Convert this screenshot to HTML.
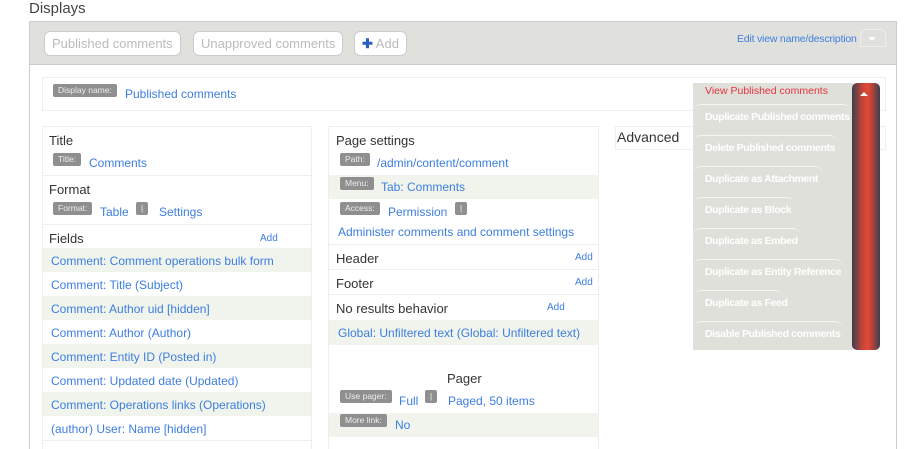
<!DOCTYPE html>
<html><head><style>
*{margin:0;padding:0;box-sizing:border-box}
html,body{width:921px;height:449px;overflow:hidden}
body{background:#fff;font-family:"Liberation Sans",sans-serif;position:relative;color:#444}
.a{position:absolute}
.lk{color:#3d7ee0;font-size:12px;white-space:nowrap}
.lbl{position:absolute;background:#8f8f8f;color:#eee;font-size:8.5px;border-radius:2px;padding:1px 5px;height:13px;line-height:11px;white-space:nowrap}
.h{font-size:13px;color:#333;white-space:nowrap}
.g{background:#f0f4ec}
.btn{position:absolute;top:31px;height:25px;border:1px solid #ccc;border-radius:6px;background:#fff;color:#bbb;font-size:13px;line-height:23px;padding:0 7px;white-space:nowrap}
.dd{position:absolute;left:693px;height:24px;color:#fff;font-weight:bold;font-size:10.5px;line-height:25px;padding-left:12px;border-top:1px solid #f4f4f0;border-radius:8px 8px 0 0;white-space:nowrap;letter-spacing:-0.4px}
.bd{border:1px solid #eee}
</style></head><body>
<div class="a" style="left:29px;top:0;font-size:15px;color:#444">Displays</div>
<div class="a" style="left:29px;top:21px;width:868px;height:44px;background:#e0e1dc;border:1px solid #ccc"></div>
<div class="a" style="left:29px;top:64px;width:868px;height:385px;border-left:1px solid #ccc;border-right:1px solid #ccc"></div>
<div class="btn" style="left:44px">Published comments</div>
<div class="btn" style="left:193px">Unapproved comments</div>
<div class="btn" style="left:354px"><span style="color:#2a5fc0;font-weight:bold">✚</span> Add</div>
<div class="a lk" style="left:737px;top:33px;font-size:10.5px;letter-spacing:-0.2px">Edit view name/description</div>
<div class="a" style="left:860px;top:29px;width:26px;height:18px;border:1px solid #eee;border-radius:6px 6px 0 0"></div>
<div class="a" style="left:868px;top:37px;border-left:4px solid transparent;border-right:4px solid transparent;border-top:4px solid #fff"></div>

<div class="a bd" style="left:42px;top:77px;width:844px;height:34px"></div>
<div class="lbl" style="left:53px;top:84px">Display name:</div>
<div class="a lk" style="left:125px;top:87px">Published comments</div>

<!-- col1 -->
<div class="a bd" style="left:42px;top:126px;width:270px;height:330px"></div>
<div class="a h" style="left:49px;top:133px">Title</div>
<div class="lbl" style="left:53px;top:153px">Title:</div>
<div class="a lk" style="left:89px;top:156px">Comments</div>
<div class="a" style="left:43px;top:175px;width:268px;border-top:1px solid #eee"></div>
<div class="a h" style="left:49px;top:182px">Format</div>
<div class="lbl" style="left:53px;top:202px">Format:</div>
<div class="a lk" style="left:100px;top:205px">Table</div>
<div class="lbl" style="left:136px;top:202px">|</div>
<div class="a lk" style="left:159px;top:205px">Settings</div>
<div class="a" style="left:43px;top:224px;width:268px;border-top:1px solid #eee"></div>
<div class="a h" style="left:49px;top:231px">Fields</div>
<div class="a lk" style="left:260px;top:233px;font-size:10px">Add</div>
<div class="a g" style="left:43px;top:248px;width:268px;height:24px"></div>
<div class="a g" style="left:43px;top:296px;width:268px;height:24px"></div>
<div class="a g" style="left:43px;top:344px;width:268px;height:24px"></div>
<div class="a g" style="left:43px;top:392px;width:268px;height:24px"></div>
<div class="a lk" style="left:51px;top:254px">Comment: Comment operations bulk form</div>
<div class="a lk" style="left:51px;top:278px">Comment: Title (Subject)</div>
<div class="a lk" style="left:51px;top:302px">Comment: Author uid [hidden]</div>
<div class="a lk" style="left:51px;top:326px">Comment: Author (Author)</div>
<div class="a lk" style="left:51px;top:350px">Comment: Entity ID (Posted in)</div>
<div class="a lk" style="left:51px;top:374px">Comment: Updated date (Updated)</div>
<div class="a lk" style="left:51px;top:398px">Comment: Operations links (Operations)</div>
<div class="a lk" style="left:51px;top:422px">(author) User: Name [hidden]</div>
<div class="a" style="left:43px;top:440px;width:268px;border-top:1px solid #eee"></div>

<!-- col2 -->
<div class="a bd" style="left:328px;top:126px;width:271px;height:330px"></div>
<div class="a h" style="left:336px;top:133px">Page settings</div>
<div class="lbl" style="left:340px;top:153px">Path:</div>
<div class="a lk" style="left:377px;top:156px">/admin/content/comment</div>
<div class="a g" style="left:329px;top:175px;width:269px;height:24px"></div>
<div class="lbl" style="left:340px;top:177px">Menu:</div>
<div class="a lk" style="left:381px;top:180px">Tab: Comments</div>
<div class="lbl" style="left:340px;top:202px">Access:</div>
<div class="a lk" style="left:388px;top:205px">Permission</div>
<div class="lbl" style="left:455px;top:202px">|</div>
<div class="a lk" style="left:338px;top:225px">Administer comments and comment settings</div>
<div class="a" style="left:329px;top:244px;width:269px;border-top:1px solid #eee"></div>
<div class="a h" style="left:336px;top:251px">Header</div>
<div class="a lk" style="left:575px;top:252px;font-size:10px">Add</div>
<div class="a" style="left:329px;top:269px;width:269px;border-top:1px solid #eee"></div>
<div class="a h" style="left:336px;top:276px">Footer</div>
<div class="a lk" style="left:575px;top:277px;font-size:10px">Add</div>
<div class="a" style="left:329px;top:294px;width:269px;border-top:1px solid #eee"></div>
<div class="a h" style="left:336px;top:301px">No results behavior</div>
<div class="a lk" style="left:547px;top:302px;font-size:10px">Add</div>
<div class="a g" style="left:329px;top:320px;width:269px;height:25px"></div>
<div class="a lk" style="left:338px;top:326px">Global: Unfiltered text (Global: Unfiltered text)</div>
<div class="a h" style="left:447px;top:371px">Pager</div>
<div class="lbl" style="left:340px;top:390px">Use pager:</div>
<div class="a lk" style="left:399px;top:394px">Full</div>
<div class="lbl" style="left:425px;top:390px">|</div>
<div class="a lk" style="left:448px;top:394px">Paged, 50 items</div>
<div class="a g" style="left:329px;top:413px;width:269px;height:24px"></div>
<div class="lbl" style="left:340px;top:414px">More link:</div>
<div class="a lk" style="left:395px;top:418px">No</div>

<!-- advanced -->
<div class="a bd" style="left:615px;top:126px;width:271px;height:24px"></div>
<div class="a h" style="left:617px;top:129px;font-size:14px">Advanced</div>

<!-- dropdown -->
<div class="a" style="left:693px;top:83px;width:160px;height:267px;background:#dfe0da"></div>
<div class="a" style="left:705px;top:85px;color:#e8323c;font-size:10.5px;white-space:nowrap">View Published comments</div>
<div class="dd" style="top:104px;width:158px">Duplicate Published comments</div>
<div class="dd" style="top:135px;width:145px">Delete Published comments</div>
<div class="dd" style="top:166px;width:130px">Duplicate as Attachment</div>
<div class="dd" style="top:197px;width:102px">Duplicate as Block</div>
<div class="dd" style="top:228px;width:108px">Duplicate as Embed</div>
<div class="dd" style="top:259px;width:150px">Duplicate as Entity Reference</div>
<div class="dd" style="top:290px;width:90px">Duplicate as Feed</div>
<div class="dd" style="top:321px;width:150px">Disable Published comments</div>
<div class="a" style="left:852px;top:83px;width:28px;height:267px;border-radius:5px;background:linear-gradient(90deg,#3b3f4e,#c0433a 35%,#e24a33 55%,#c0433a 70%,#3b3f4e)"></div>
<div class="a" style="left:860px;top:92px;border-left:4px solid transparent;border-right:4px solid transparent;border-bottom:4px solid #fff"></div>
</body></html>
